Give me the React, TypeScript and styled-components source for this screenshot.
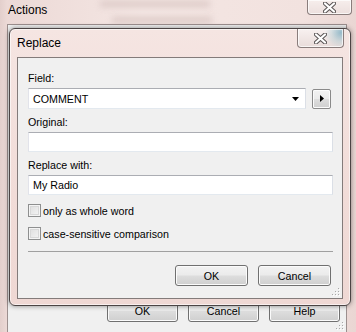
import React from 'react'
import styled, { createGlobalStyle } from 'styled-components'

const GlobalStyle = createGlobalStyle`
  html, body {
    margin: 0;
    padding: 0;
  }
  body {
    width: 356px;
    height: 332px;
    overflow: hidden;
    font-family: "Liberation Sans", Arial, sans-serif;
    font-size: 10.7px;
    color: #000;
  }
`

const Desktop = styled.div`
  position: relative;
  width: 356px;
  height: 332px;
  overflow: hidden;
  display: flex;
  flex-direction: column;
  background: linear-gradient(90deg, #e3cfcc 0px, #ecd9d6 7px, #f4e6e3 40%, #f2e2df 85%, #ead6d3 100%);
`

const ParentTitleBar = styled.div`
  position: relative;
  height: 24px;
  display: flex;
  justify-content: space-between;
  align-items: flex-start;
  flex-shrink: 0;
`

const Blur = styled.div<{ $w: number; $top: number; $left: number }>`
  position: absolute;
  top: ${p => p.$top}px;
  left: ${p => p.$left}px;
  width: ${p => p.$w}px;
  height: 6px;
  background: #dccac7;
  filter: blur(3px);
`

const ParentTitle = styled.span`
  position: relative;
  padding: 3px 0 0 8px;
  font-size: 12px;
  line-height: 15px;
  color: #000;
`

const CloseButton = styled.div<{ $parent?: boolean }>`
  position: relative;
  box-sizing: border-box;
  width: ${p => (p.$parent ? 45 : 47)}px;
  height: ${p => (p.$parent ? 15 : 19)}px;
  margin-right: ${p => (p.$parent ? 4 : 6)}px;
  border: 1px solid #8a7d7c;
  border-top: none;
  border-radius: 0 0 4px 4px;
  display: flex;
  align-items: center;
  justify-content: center;
  background: ${p =>
    p.$parent
      ? 'linear-gradient(#f6eeec, #ecdfdd)'
      : 'radial-gradient(circle at 95% 20%, rgba(120,170,190,0.75) 0px, rgba(150,190,200,0.35) 9px, rgba(255,255,255,0) 16px), linear-gradient(#f8f1f0, #e9dcda)'};
  box-shadow: inset 0 0 0 1px rgba(255, 255, 255, 0.7);
`

const ParentClient = styled.div`
  flex: 1;
  margin: 0 9px 0 7px;
  background: #f0f0f0;
  border: 1px solid #9c8f8e;
  border-bottom: none;
  display: flex;
  flex-direction: column;
  justify-content: flex-end;
  padding: 0 6px 10px 0;
  position: relative;
`

const ButtonRow = styled.div`
  display: flex;
  justify-content: flex-end;
  gap: 10px;
`

const PushButton = styled.button<{ $w?: number; $h?: number }>`
  box-sizing: border-box;
  width: ${p => p.$w ?? 73}px;
  height: ${p => p.$h ?? 21}px;
  padding: 0;
  border: 1px solid #707070;
  border-radius: 3px;
  font-family: "Liberation Sans", Arial, sans-serif;
  font-size: 10.7px;
  color: #000;
  background: linear-gradient(#f2f2f2 0%, #ebebeb 48%, #dddddd 52%, #cfcfcf 100%);
  box-shadow: inset 0 0 0 1px #fbfbfb;
`

const Grip = styled.svg`
  position: absolute;
  right: 2px;
  bottom: 2px;
`

const Dialog = styled.div`
  position: absolute;
  left: 9px;
  top: 28px;
  width: 342px;
  height: 278px;
  box-sizing: border-box;
  border: 1px solid #4b4444;
  border-radius: 6px;
  background: linear-gradient(#f5e5e2, #f1dcd8 60%, #efd8d4);
  box-shadow: 0 0 5px rgba(0, 0, 0, 0.45), inset 0 0 0 1px rgba(255, 255, 255, 0.6);
  display: flex;
  flex-direction: column;
`

const DialogTitleBar = styled.div`
  height: 28px;
  flex-shrink: 0;
  display: flex;
  justify-content: space-between;
  align-items: flex-start;
  padding-left: 7px;
`

const DialogTitle = styled.span`
  font-size: 12px;
  line-height: 28px;
`

const DialogClient = styled.div`
  position: relative;
  flex: 1;
  margin: 0 7px 6px 7px;
  background: #f0f0f0;
  border: 1px solid #837b7a;
  padding: 13px 9px 0 10px;
  display: flex;
  flex-direction: column;
`

const Field = styled.div`
  display: flex;
  flex-direction: column;
  gap: 3px;
  margin-bottom: 6px;
`

const Label = styled.label`
  line-height: 14px;
  height: 14px;
`

const ComboRow = styled.div`
  display: flex;
  align-items: center;
  gap: 6px;
  padding-right: 2px;
`

const TextBox = styled.div<{ $h?: number }>`
  box-sizing: border-box;
  height: ${p => p.$h ?? 20}px;
  flex: 1 1 auto;
  background: #fff;
  border: 1px solid #e3e9ef;
  border-top-color: #abadb3;
  border-left-color: #e2e3ea;
  border-right-color: #dbdfe6;
  display: flex;
  align-items: center;
  justify-content: space-between;
  padding: 0 6px 0 4px;
  line-height: 14px;
`

const Arrow = styled.svg`
  flex-shrink: 0;
`

const SmallButton = styled(PushButton)`
  display: flex;
  align-items: center;
  justify-content: center;
  border-radius: 2px;
  border-color: #8a8a8a;
`

const CheckRow = styled.div<{ $mt: number }>`
  display: flex;
  align-items: center;
  gap: 2px;
  margin-top: ${p => p.$mt}px;
  height: 13px;
`

const CheckBox = styled.span`
  box-sizing: border-box;
  width: 13px;
  height: 13px;
  border: 1px solid #8e8f8f;
  background: linear-gradient(135deg, #dcdcdc, #f6f6f6);
  box-shadow: inset 0 0 0 1px #f4f4f4, inset 0 0 0 2px #d8d8d8;
`

const Separator = styled.div`
  margin-top: 11px;
  height: 1px;
  background: #a0a0a0;
`

const DialogButtons = styled(ButtonRow)`
  margin-top: 13px;
  padding-right: 2px;
`

function CloseGlyph() {
  return (
    <svg width="13" height="11" viewBox="0 0 13 11">
      <path d="M2 1.5 L11 9.5 M11 1.5 L2 9.5" stroke="#5b5656" strokeWidth="4.2" strokeLinecap="round" />
      <path d="M2 1.5 L11 9.5 M11 1.5 L2 9.5" stroke="#ffffff" strokeWidth="2.2" strokeLinecap="round" />
    </svg>
  )
}

function GripDots() {
  const dots = [
    [9, 1], [9, 4], [6, 4], [9, 7], [6, 7], [3, 7],
  ]
  return (
    <Grip width="11" height="9" viewBox="0 0 11 9">
      {dots.map(([x, y], i) => (
        <g key={i}>
          <rect x={x + 1} y={y + 1} width="1" height="1" fill="#ffffff" />
          <rect x={x} y={y} width="1" height="1" fill="#a8a8a8" />
        </g>
      ))}
    </Grip>
  )
}

export default function App() {
  return (
    <>
      <GlobalStyle />
      <Desktop>
        <ParentTitleBar>
          <Blur $w={110} $top={1} $left={100} />
          <Blur $w={100} $top={17} $left={112} />
          <ParentTitle>Actions</ParentTitle>
          <CloseButton $parent>
            <CloseGlyph />
          </CloseButton>
        </ParentTitleBar>
        <ParentClient>
          <ButtonRow>
            <PushButton $w={71} $h={22}>OK</PushButton>
            <PushButton $w={71} $h={22}>Cancel</PushButton>
            <PushButton $w={71} $h={22}>Help</PushButton>
          </ButtonRow>
          <GripDots />
        </ParentClient>

        <Dialog>
          <DialogTitleBar>
            <DialogTitle>Replace</DialogTitle>
            <CloseButton>
              <CloseGlyph />
            </CloseButton>
          </DialogTitleBar>
          <DialogClient>
            <Field>
              <Label>Field:</Label>
              <ComboRow>
                <TextBox $h={21}>
                  <span>COMMENT</span>
                  <Arrow width="7" height="4" viewBox="0 0 7 4">
                    <path d="M0 0 H7 L3.5 4 Z" fill="#000" />
                  </Arrow>
                </TextBox>
                <SmallButton $w={19} $h={20}>
                  <svg width="4" height="7" viewBox="0 0 4 7">
                    <path d="M0 0 L4 3.5 L0 7 Z" fill="#000" />
                  </svg>
                </SmallButton>
              </ComboRow>
            </Field>
            <Field>
              <Label>Original:</Label>
              <TextBox />
            </Field>
            <Field>
              <Label>Replace with:</Label>
              <TextBox>
                <span>My Radio</span>
              </TextBox>
            </Field>
            <CheckRow $mt={3}>
              <CheckBox />
              <span>only as whole word</span>
            </CheckRow>
            <CheckRow $mt={10}>
              <CheckBox />
              <span>case-sensitive comparison</span>
            </CheckRow>
            <Separator />
            <DialogButtons>
              <PushButton>OK</PushButton>
              <PushButton>Cancel</PushButton>
            </DialogButtons>
            <GripDots />
          </DialogClient>
        </Dialog>
      </Desktop>
    </>
  )
}
